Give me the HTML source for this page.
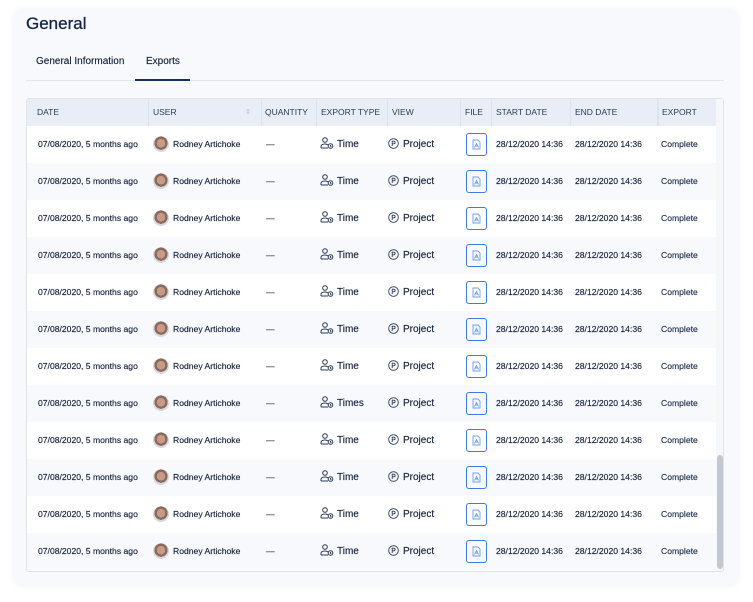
<!DOCTYPE html>
<html><head><meta charset="utf-8"><style>
*{box-sizing:border-box;margin:0;padding:0}
body{width:753px;height:602px;background:#fff;font-family:"Liberation Sans",sans-serif;position:relative;overflow:hidden}
.card{position:absolute;left:14px;top:10px;width:724px;height:575px;background:#f8f9fc;border-radius:8px;box-shadow:0 0 8px rgba(0,0,0,0.06)}
h1{position:absolute;left:26px;top:14px;font-size:17px;font-weight:normal;color:#13254a;-webkit-text-stroke:0.3px #13254a}
.tab{position:absolute;top:56px;font-size:10px;color:#13223f;-webkit-text-stroke:0.15px #13223f}
.line{position:absolute;left:26px;top:80px;width:698px;height:1px;background:#e3e6ec}
.ul{position:absolute;left:135px;top:79px;width:55px;height:2px;background:#15305c}
.tbl{position:absolute;left:26px;top:98px;width:698px;height:474px;border:1px solid #dfe3ea;border-radius:3px;background:#fff;overflow:hidden}
.hdr{position:absolute;left:0;top:0;width:689px;height:27px;background:#e9eef6}
.h{position:absolute;top:0;height:27px;line-height:27px;font-size:8.5px;color:#2a3b5a;padding-left:10px;border-left:1px solid #dde3ec}
.row{position:absolute;left:0;width:689px;height:37px}
.c{position:absolute;top:0;height:37px;line-height:37px;font-size:8.6px;color:#15223d;white-space:nowrap;-webkit-text-stroke:0.15px #15223d}
.av{position:absolute;top:10px;width:16px;height:16px;border-radius:50%;background:radial-gradient(circle at 50% 45%,#c99a86 0 35%,#8a6a5c 36% 55%,#d6d9e0 56%)}
.pdf{position:absolute;top:7px;width:21px;height:23px;border:1px solid #3d7de0;border-radius:3px}
.sb{position:absolute;left:689px;top:0;width:9px;height:474px;background:#f6f7f9}
.th{position:absolute;left:690px;top:356px;width:6px;height:114px;background:#c3c7cf;border-radius:3px}
</style></head><body>
<div class="card"></div>
<h1>General</h1>
<div class="tab" style="left:36px">General Information</div>
<div class="tab" style="left:146px">Exports</div>
<div class="line"></div><div class="ul"></div>
<div class="tbl">
<div class="hdr">
<div class="h" style="left:0;border:none">DATE</div>
<div class="h" style="left:121px;padding-left:4px">USER<span style="position:absolute;left:96px;color:#b8bfcc;font-size:7px">&#8661;</span></div>
<div class="h" style="left:234px;width:55px;padding-left:3px">QUANTITY</div>
<div class="h" style="left:289px;padding-left:4px">EXPORT TYPE</div>
<div class="h" style="left:360px;padding-left:4px">VIEW</div>
<div class="h" style="left:433px;padding-left:4px">FILE</div>
<div class="h" style="left:464px;padding-left:4px">START DATE</div>
<div class="h" style="left:543px;padding-left:4px">END DATE</div>
<div class="h" style="left:630px;padding-left:3px;border-left:2px solid #dde3ec">EXPORT</div>
</div>
<div id="rows"></div>
<div class="sb"></div><div class="th"></div>
</div>
<script>
var h='';for(var i=0;i<12;i++){var t=27+i*37;var bg=i%2?'#f8f9fd':'#fff';
h+='<div class="row" style="top:'+t+'px;background:'+bg+'">'+
'<div class="c" style="left:11px">07/08/2020, 5 months ago</div>'+
'<div class="av" style="left:126px"></div>'+
'<div class="c" style="left:146px">Rodney Artichoke</div>'+
'<div class="c" style="left:239px;color:#333">—</div>'+
'<div class="c" style="left:293px;font-size:10px"><svg width="14" height="12" viewBox="0 0 14 12" style="vertical-align:-2px;margin-right:3px" fill="none" stroke="#2a3b5a" stroke-width="1"><circle cx="5" cy="3" r="2.3"/><path d="M1 11V9.5Q1 7 5 7Q7 7 8 8M1 11H8"/><circle cx="10.5" cy="9" r="2.3"/><path d="M10.5 8v1.2h1"/></svg>'+(i==7?'Times':'Time')+'</div>'+
'<div class="c" style="left:361px;font-size:10px"><svg width="11" height="11" viewBox="0 0 11 11" style="vertical-align:-2px;margin-right:4px" fill="none" stroke="#2a3b5a" stroke-width="0.9"><circle cx="5.5" cy="5.5" r="4.8"/><path d="M4.2 8V3.2h1.6a1.3 1.3 0 0 1 0 2.6H4.2"/></svg>Project</div>'+
'<div class="pdf" style="left:439px"><svg width="19" height="21" viewBox="0 0 19 21" fill="none" stroke="#6f9ee8" stroke-width="0.9"><path d="M6 6h5l2 2v7H6z"/><path d="M7.5 13.5l2-4 2 4M8.2 12h2.6"/></svg></div>'+
'<div class="c" style="left:469px">28/12/2020 14:36</div>'+
'<div class="c" style="left:548px">28/12/2020 14:36</div>'+
'<div class="c" style="left:634px;color:#2a3b5a">Complete</div>'+
'</div>';}
document.getElementById('rows').innerHTML=h;
</script>
</body></html>
